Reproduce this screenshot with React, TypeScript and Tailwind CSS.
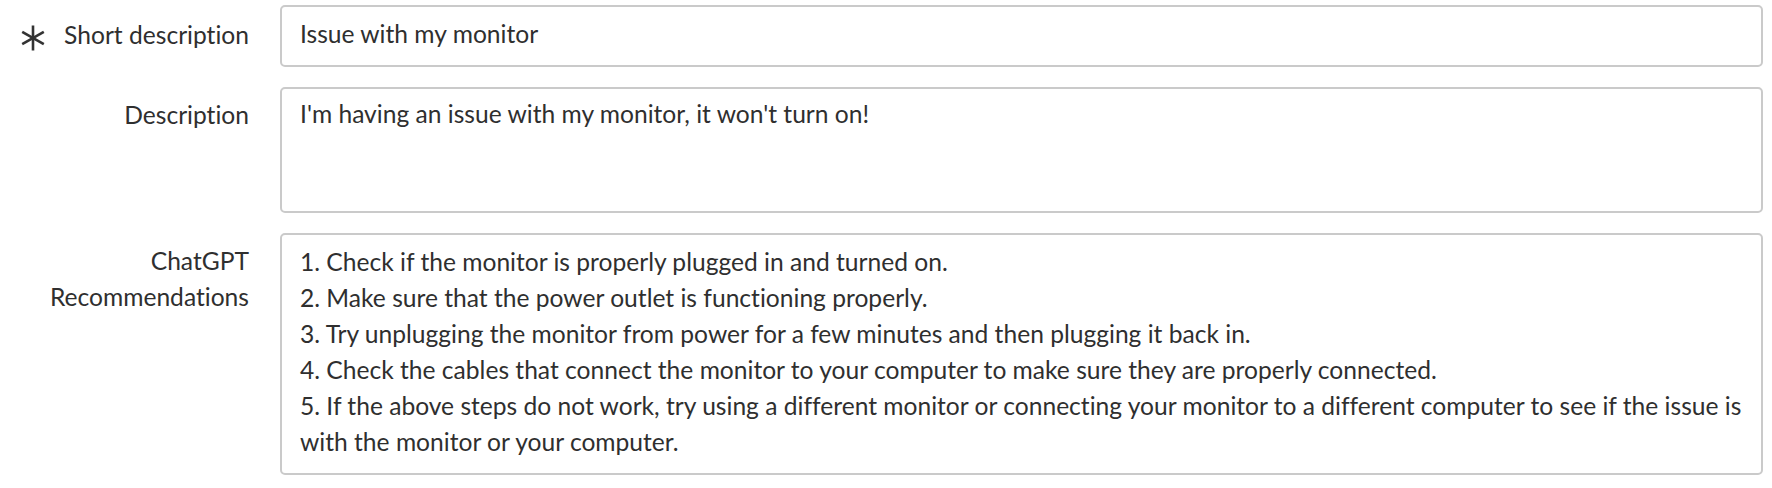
import React from 'react'

const font = { fontFamily: 'Lato, "Noto Sans", sans-serif' }

function RequiredMark() {
  return (
    <svg width="24" height="26" viewBox="0 0 24 26" className="shrink-0 mt-[8px]">
      <g stroke="#333" strokeWidth="2.6" strokeLinecap="butt">
        <line x1="12" y1="0.5" x2="12" y2="25.5" />
        <line x1="1.2" y1="6.8" x2="22.8" y2="19.2" />
        <line x1="1.2" y1="19.2" x2="22.8" y2="6.8" />
      </g>
    </svg>
  )
}

const recommendations = [
  '1. Check if the monitor is properly plugged in and turned on.',
  '2. Make sure that the power outlet is functioning properly.',
  '3. Try unplugging the monitor from power for a few minutes and then plugging it back in.',
  '4. Check the cables that connect the monitor to your computer to make sure they are properly connected.',
  '5. If the above steps do not work, try using a different monitor or connecting your monitor to a different computer to see if the issue is with the monitor or your computer.',
]

export default function App() {
  return (
    <div
      className="w-[1772px] h-[488px] bg-white pt-[5px] pr-[9px] text-[24.6px] text-[#2f2f2f] [font-variant-ligatures:none]"
      style={font}
    >
      <div className="flex flex-col gap-[20px]">
        {/* short description */}
        <div className="flex items-start">
          <div className="w-[249px] shrink-0 flex justify-between items-start pl-[21px] pt-[12px] leading-[36px]">
            <RequiredMark />
            <span>Short description</span>
          </div>
          <div className="ml-[31px] flex-1 h-[62px] border-2 border-[#cacaca] rounded-[5px] px-[18px] pt-[9px] leading-[36px]">
            Issue with my monitor
          </div>
        </div>

        {/* description */}
        <div className="flex items-start">
          <div className="w-[249px] shrink-0 text-right pt-[10px] leading-[36px]">Description</div>
          <div className="ml-[31px] flex-1 h-[126px] border-2 border-[#cacaca] rounded-[5px] px-[18px] pt-[7px] leading-[36px]">
            I'm having an issue with my monitor, it won't turn on!
          </div>
        </div>

        {/* recommendations */}
        <div className="flex items-start">
          <div className="w-[249px] shrink-0 text-right pt-[10px] leading-[36px]">
            ChatGPT
            <br />
            Recommendations
          </div>
          <div className="ml-[31px] flex-1 h-[242px] border-2 border-[#cacaca] rounded-[5px] px-[18px] pt-[9px] leading-[36px]">
            {recommendations.map((line) => (
              <div key={line}>{line}</div>
            ))}
          </div>
        </div>
      </div>
    </div>
  )
}
